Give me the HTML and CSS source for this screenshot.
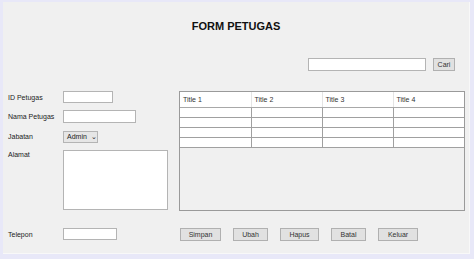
FILE: index.html
```html
<!DOCTYPE html>
<html lang="en">
<head>
  <meta charset="UTF-8">
  <title>Form Petugas</title>
  <link rel="stylesheet" href="styles.css">
</head>
<body>

  <div class="window">
    <h1 class="title">FORM PETUGAS</h1>

    <div class="search-row">
      <input type="text" class="search-input">
      <button class="btn btn-cari">Cari</button>
    </div>

    <div class="main">
      <div class="fields">
        <label class="lbl">ID Petugas</label>
        <input type="text" class="field field-id">
        <label class="lbl">Nama Petugas</label>
        <input type="text" class="field field-nama">
        <label class="lbl">Jabatan</label>
        <div class="combo">Admin <span class="chev">&#8964;</span></div>
        <label class="lbl lbl-top">Alamat</label>
        <textarea class="field field-alamat"></textarea>
      </div>

      <div class="table-box">
        <table class="grid">
          <thead>
            <tr><th>Title 1</th><th>Title 2</th><th>Title 3</th><th>Title 4</th></tr>
          </thead>
          <tbody>
            <tr><td></td><td></td><td></td><td></td></tr>
            <tr><td></td><td></td><td></td><td></td></tr>
            <tr><td></td><td></td><td></td><td></td></tr>
            <tr><td></td><td></td><td></td><td></td></tr>
          </tbody>
        </table>
      </div>

      <div class="fields fields-bottom">
        <label class="lbl">Telepon</label>
        <input type="text" class="field field-telp">
      </div>

      <div class="actions">
        <button class="btn w-simpan">Simpan</button>
        <button class="btn w-ubah">Ubah</button>
        <button class="btn w-hapus">Hapus</button>
        <button class="btn w-batal">Batal</button>
        <button class="btn w-keluar">Keluar</button>
      </div>
    </div>
  </div>

</body>
</html>
```

FILE: styles.css
```css
body, html {
  margin: 0;
  height: 100%;
  background: #e8e8f8;
  font-family: "Liberation Sans", Arial, sans-serif;
}

.window {
  box-sizing: border-box;
  width: 467px;
  height: 252px;
  margin: 2px 0 0 3px;
  background-color: #f0f0f0;
  border-right: 1px solid #f8f8f8;
  border-bottom: 1px solid #f8f8f8;
}

.title {
  margin: 0;
  padding-top: 18px;
  height: 17px;
  line-height: 13px;
  font-size: 11px;
  font-weight: bold;
  text-align: center;
  color: #111;
}

.search-row {
  display: flex;
  justify-content: flex-end;
  gap: 7px;
  margin-top: 21px;
  padding-right: 14px;
}

.search-input {
  box-sizing: border-box;
  width: 118px;
  height: 13px;
  margin: 0;
  border: 1px solid #b4b4b4;
  background: #fff;
}

.btn {
  box-sizing: border-box;
  height: 13px;
  margin: 0;
  padding: 0;
  border: 1px solid #b0b0b0;
  background-color: #e1e1e1;
  font-family: "Liberation Sans", Arial, sans-serif;
  font-size: 7px;
  color: #333;
}

.btn-cari {
  width: 22px;
}

.main {
  display: grid;
  grid-template-columns: 171px 286px;
  grid-template-rows: 120px 13px;
  row-gap: 17px;
  margin-top: 20px;
  padding-left: 5px;
}

.fields {
  display: grid;
  grid-template-columns: 55px 1fr;
  grid-template-rows: 12px 13px 13px 60px;
  row-gap: 7px;
  align-items: center;
  justify-items: start;
}

.fields-bottom {
  grid-template-rows: 12px;
}

.lbl {
  font-size: 7px;
  color: #222;
}

.lbl-top {
  align-self: start;
  padding-top: 1px;
}

.field {
  box-sizing: border-box;
  margin: 0;
  padding: 0;
  border: 1px solid #b4b4b4;
  background: #fff;
  resize: none;
}

.field-id {
  width: 50px;
  height: 12px;
}

.field-nama {
  width: 73px;
  height: 13px;
}

.field-alamat {
  width: 105px;
  height: 60px;
}

.field-telp {
  width: 54px;
  height: 12px;
}

.combo {
  box-sizing: border-box;
  width: 35px;
  height: 12px;
  padding-left: 3px;
  border: 1px solid #b4b4b4;
  background: #e6e6e6;
  font-size: 7px;
  line-height: 10px;
  color: #222;
}

.chev {
  font-size: 7px;
  margin-left: 2px;
}

.table-box {
  box-sizing: border-box;
  width: 286px;
  height: 120px;
  margin-left: 0;
  border: 1px solid #9a9a9a;
  background: #f0f0f0;
}

.grid {
  width: 100%;
  table-layout: fixed;
  border-collapse: collapse;
  background: #fff;
}

.grid th {
  height: 15px;
  padding: 0 0 0 3px;
  text-align: left;
  font-weight: normal;
  font-size: 7px;
  color: #333;
  border-left: 1px solid #e4e4e4;
  border-bottom: 1px solid #a8a8a8;
}

.grid td {
  height: 9px;
  padding: 0;
  border-left: 1px solid #a0a0a0;
  border-bottom: 1px solid #a0a0a0;
}

.grid th:first-child,
.grid td:first-child {
  border-left: none;
}

.actions {
  display: flex;
  gap: 12px;
  padding-left: 1px;
}

.w-simpan { width: 41px; }
.w-ubah { width: 35px; }
.w-hapus { width: 39px; }
.w-batal { width: 35px; }
.w-keluar { width: 40px; }
```
